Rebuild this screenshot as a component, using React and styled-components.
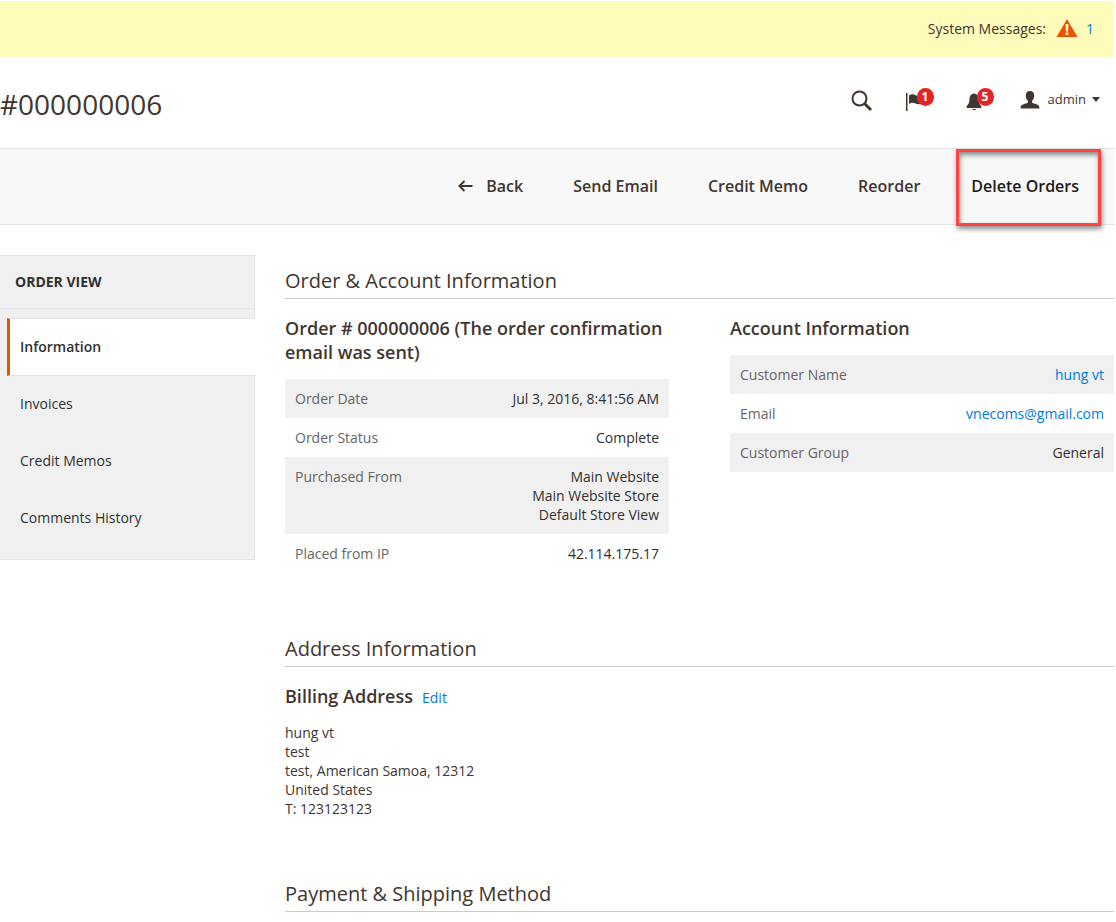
import React from 'react';
import styled, { createGlobalStyle } from 'styled-components';

const GlobalStyle = createGlobalStyle`
  * {
    box-sizing: border-box;
  }
  body {
    margin: 0;
    padding: 1px 2px 0 0;
    background: #fff;
    color: #41362f;
    font-family: 'Open Sans', 'Noto Sans', sans-serif;
    font-size: 14px;
    line-height: 19px;
  }
  h1, h2, h3, p, ul, address {
    margin: 0;
    padding: 0;
  }
  button {
    font: inherit;
    color: inherit;
    background: none;
    border: none;
    padding: 0;
    cursor: pointer;
  }
  svg {
    display: block;
  }
`;

const Messages = styled.div`
  display: flex;
  align-items: center;
  justify-content: flex-end;
  gap: 10px;
  height: 56px;
  padding: 0 20px 2px 0;
  background: #fffbbb;
`;

const MessageLink = styled.a`
  display: flex;
  align-items: center;
  gap: 8px;
  color: #007bdb;
  text-decoration: none;
`;

const Header = styled.header`
  display: flex;
  align-items: center;
  justify-content: space-between;
  height: 91px;
  padding: 0 14px 0 0;
`;

const PageTitle = styled.h1`
  padding-top: 2px;
  font-size: 28px;
  font-weight: 400;
  line-height: 36px;
`;

const HeaderTools = styled.div`
  display: flex;
  align-items: center;
  padding-bottom: 4px;
`;

const Tool = styled.button`
  position: relative;
  width: ${(props) => props.$width}px;
  height: 22px;
`;

const Badge = styled.span`
  position: absolute;
  top: -2px;
  left: 11px;
  min-width: 17px;
  height: 18px;
  border-radius: 9px;
  background: #e22626;
  color: #fff;
  font-size: 12px;
  font-weight: 700;
  line-height: 18px;
  text-align: center;
`;

const UserMenu = styled.button`
  display: flex;
  align-items: center;
  padding-bottom: 2px;
  font-size: 13px;
`;

const UserName = styled.span`
  margin: 0 6px 0 8px;
`;

const Toolbar = styled.div`
  display: flex;
  align-items: center;
  justify-content: flex-end;
  height: 77px;
  padding-right: 13px;
  border-top: 1px solid #e3e3e3;
  border-bottom: 1px solid #e3e3e3;
  background: #f8f8f8;
`;

const Actions = styled.div`
  display: flex;
  align-items: center;
  gap: 50px;
  margin-right: 36px;
  padding-bottom: 2px;
`;

const Action = styled.button`
  display: flex;
  align-items: center;
  gap: 13px;
  font-size: 16px;
  font-weight: 600;
  line-height: 22px;
`;

const DeleteAction = styled(Action)`
  align-self: flex-start;
  height: 77px;
  padding: 0 19px 4px 12px;
  border: 3px solid #ff4343;
  color: #1d1a18;
  box-shadow: 1px 3px 5px rgba(0, 0, 0, 0.45),
    inset 1px 3px 5px rgba(0, 0, 0, 0.45);
`;

const Page = styled.div`
  display: flex;
  align-items: flex-start;
  gap: 30px;
  padding-top: 30px;
`;

const Sidebar = styled.nav`
  flex: 0 0 255px;
  padding-bottom: 13px;
  border: 1px solid #e3e3e3;
  border-left: none;
  background: #f0f0f0;
`;

const SidebarTitle = styled.h2`
  height: 53px;
  padding: 16px 15px;
  border-bottom: 1px solid #e3e3e3;
  color: #303030;
  font-size: 14px;
  font-weight: 700;
  line-height: 19px;
`;

const Tabs = styled.ul`
  padding-top: 9px;
  list-style: none;
`;

const Tab = styled.a`
  display: block;
  margin-left: 7px;
  padding: 19px 10px 19px 13px;
  color: #303030;
  text-decoration: none;
  ${(props) =>
    props.$active &&
    `
    margin-right: -1px;
    margin-bottom: -1px;
    padding: 18px 10px 19px;
    border: 1px solid #e3e3e3;
    border-left: 3px solid #eb5202;
    border-right: none;
    background: #fff;
    font-weight: 600;
  `}
`;

const Content = styled.main`
  flex: 1;
  min-width: 0;
  padding-top: 14px;
`;

const Section = styled.section`
  margin-bottom: 64px;
`;

const SectionTitle = styled.h2`
  margin-bottom: 17px;
  padding-bottom: 5px;
  border-bottom: 1px solid #cacaca;
  font-size: 20px;
  font-weight: 400;
  line-height: 24px;
`;

const Columns = styled.div`
  display: grid;
  grid-template-columns: 1fr 1fr;
  align-items: start;
  gap: 61px;
`;

const BlockTitle = styled.h3`
  margin-bottom: 15px;
  font-size: 18px;
  font-weight: 600;
  line-height: 24px;
`;

const AddressTitle = styled(BlockTitle)`
  display: flex;
  align-items: baseline;
  gap: 9px;
  height: 24px;
`;

const Table = styled.table`
  width: 100%;
  border-collapse: collapse;

  tr:nth-child(odd) {
    background: #f0f0f0;
  }
  th,
  td {
    padding: 10px;
    vertical-align: top;
  }
  th {
    color: #666;
    font-weight: 400;
    text-align: left;
  }
  td {
    color: #303030;
    text-align: right;
    white-space: pre-line;
  }
`;

const TextLink = styled.a`
  color: #007bdb;
  font-size: 14px;
  font-weight: 400;
  text-decoration: none;
`;

const BillingAddress = styled.address`
  font-style: normal;
  white-space: pre-line;
`;

const tabs = ['Information', 'Invoices', 'Credit Memos', 'Comments History'];

const orderRows = [
  ['Order Date', 'Jul 3, 2016, 8:41:56 AM'],
  ['Order Status', 'Complete'],
  ['Purchased From', 'Main Website\nMain Website Store\nDefault Store View'],
  ['Placed from IP', '42.114.175.17'],
];

const accountRows = [
  ['Customer Name', <TextLink href='#customer'>hung vt</TextLink>],
  [
    'Email',
    <TextLink href='mailto:vnecoms@gmail.com'>vnecoms@gmail.com</TextLink>,
  ],
  ['Customer Group', 'General'],
];

const InfoTable = ({ rows }) => (
  <Table>
    <tbody>
      {rows.map(([label, value]) => (
        <tr key={label}>
          <th scope='row'>{label}</th>
          <td>{value}</td>
        </tr>
      ))}
    </tbody>
  </Table>
);

const WarningIcon = () => (
  <svg width='22' height='20' viewBox='0 0 22 20'>
    <path d='M11 1 L21.5 19 H0.5 Z' fill='#eb5202' />
    <path d='M9.5 6h3l-.4 7.500h-2.200z M9.700 14.500h2.600v2.500h-2.600z' fill='#fffbbb' />
  </svg>
);

const SearchIcon = () => (
  <svg width='22' height='22' viewBox='0 0 22 22' fill='none' stroke='#41362f'>
    <circle cx='8.5' cy='8.5' r='7' strokeWidth='2' />
    <path d='M13.5 13.5 L20 20' strokeWidth='3' />
  </svg>
);

const FlagIcon = () => (
  <svg width='18' height='22' viewBox='0 0 18 22' fill='#41362f'>
    <path d='M0 3h1.500v18H0z' />
    <path d='M3 5.500c2-1.600 4.500-1.600 7 0 1.800 1 3.500 1 6 0v8c-2.500 1.200-4.500 1-6.500 0-2.200-1.200-4.500-1-6.500.500z' />
  </svg>
);

const BellIcon = () => (
  <svg width='18' height='22' viewBox='0 0 18 22' fill='#41362f'>
    <path d='M8 3.500c-3.500.500-4.500 3-4.500 6 0 3-1 5-2.800 6.500V18h14.600v-2c-1.800-1.500-2.800-3.500-2.800-6.500 0-3-1-5.500-4.500-6z' />
    <path d='M6 19h4c-.5 1.600-3.500 1.600-4 0z' />
  </svg>
);

const UserIcon = () => (
  <svg width='20' height='18' viewBox='0 0 20 18' fill='#41362f'>
    <path d='M10 0c2.800 0 4.300 1.800 4.200 4.500-.1 2.500-1 4.500-2.200 5.500v1.500c0 .8 6 1.500 7 3.500.4.800.4 1.800.4 2.500H.600c0-.7 0-1.700.4-2.500 1-2 7-2.700 7-3.500V10C6.800 9 5.900 7 5.800 4.500 5.700 1.800 7.200 0 10 0z' />
  </svg>
);

const CaretIcon = () => (
  <svg width='8' height='5' viewBox='0 0 8 5' fill='#41362f'>
    <path d='M0 0h8L4 5z' />
  </svg>
);

const BackIcon = () => (
  <svg
    width='15'
    height='12'
    viewBox='0 0 15 12'
    fill='none'
    stroke='#41362f'
    strokeWidth='2'
  >
    <path d='M14.500 6H1.500M6.500 1 1.500 6l5 5' />
  </svg>
);

const App = () => {
  return (
    <>
      <GlobalStyle />
      <Messages>
        <span>System Messages:</span>
        <MessageLink href='#messages'>
          <WarningIcon />1
        </MessageLink>
      </Messages>
      <Header>
        <PageTitle>#000000006</PageTitle>
        <HeaderTools>
          <Tool $width={55} aria-label='Search'>
            <SearchIcon />
          </Tool>
          <Tool $width={60} aria-label='Reports'>
            <FlagIcon />
            <Badge>1</Badge>
          </Tool>
          <Tool $width={54} aria-label='Notifications'>
            <BellIcon />
            <Badge>5</Badge>
          </Tool>
          <UserMenu>
            <UserIcon />
            <UserName>admin</UserName>
            <CaretIcon />
          </UserMenu>
        </HeaderTools>
      </Header>
      <Toolbar>
        <Actions>
          <Action>
            <BackIcon />
            Back
          </Action>
          <Action>Send Email</Action>
          <Action>Credit Memo</Action>
          <Action>Reorder</Action>
        </Actions>
        <DeleteAction>Delete Orders</DeleteAction>
      </Toolbar>
      <Page>
        <Sidebar>
          <SidebarTitle>ORDER VIEW</SidebarTitle>
          <Tabs>
            {tabs.map((tab, index) => (
              <li key={tab}>
                <Tab href='#tab' $active={index === 0}>
                  {tab}
                </Tab>
              </li>
            ))}
          </Tabs>
        </Sidebar>
        <Content>
          <Section>
            <SectionTitle>Order &amp; Account Information</SectionTitle>
            <Columns>
              <div>
                <BlockTitle>
                  Order # 000000006 (The order confirmation email was sent)
                </BlockTitle>
                <InfoTable rows={orderRows} />
              </div>
              <div>
                <BlockTitle>Account Information</BlockTitle>
                <InfoTable rows={accountRows} />
              </div>
            </Columns>
          </Section>
          <Section>
            <SectionTitle>Address Information</SectionTitle>
            <AddressTitle>
              Billing Address
              <TextLink href='#edit'>Edit</TextLink>
            </AddressTitle>
            <BillingAddress>
              {
                'hung vt\ntest\ntest, American Samoa, 12312\nUnited States\nT: 123123123'
              }
            </BillingAddress>
          </Section>
          <SectionTitle>Payment &amp; Shipping Method</SectionTitle>
        </Content>
      </Page>
    </>
  );
};

export default App;
